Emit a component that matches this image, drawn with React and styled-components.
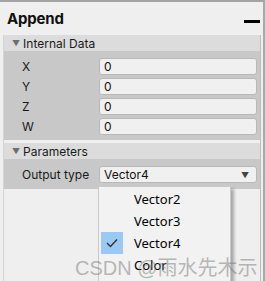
import React from 'react';
import styled, { createGlobalStyle } from 'styled-components';

const GlobalStyle = createGlobalStyle`
  html, body {
    margin: 0;
    padding: 0;
    background: #efefef;
  }
`;

const Node = styled.div`
  position: relative;
  box-sizing: border-box;
  width: 265px;
  height: 281px;
  overflow: hidden;
  background: #efefef;
  border-top: 2px solid #a4a4a4;
  border-right: 2px solid #a8a8a8;
  font-family: Inter, "Noto Sans", sans-serif;
  color: #111;
`;

const Header = styled.div`
  height: 33px;
  display: flex;
  align-items: center;
  justify-content: space-between;
  padding: 0 3px 0 7px;
`;

const Title = styled.div`
  font-size: 15px;
  font-weight: 700;
  letter-spacing: -0.2px;
  color: #111;
`;

const Minus = styled.div`
  width: 16px;
  height: 3px;
  margin-top: 5px;
  background: #000;
`;

const Content = styled.div`
  margin: 0 2px 0 3px;
  border-right: 1px solid #bcbcbc;
  border-left: 1px solid #d4d4d4;
  min-height: 260px;
`;

const SectionHeader = styled.div`
  height: 16px;
  display: flex;
  align-items: center;
  gap: 3px;
  padding-left: 8px;
  background: #dcdcdc;
  font-size: 12px;
  color: #1a1a1a;
  margin-top: ${(p) => (p.$gap ? '3px' : '0')};
`;

const Arrow = styled.span`
  font-size: 8px;
  color: #6e6e6e;
`;

const Body = styled.div`
  background: #c8c8c8;
  padding: 7px 0 6px;
  display: flex;
  flex-direction: column;
  gap: 4px;
`;

const Row = styled.div`
  display: grid;
  grid-template-columns: 95px 1fr;
  align-items: center;
  height: ${(p) => p.$h || 16}px;
  font-size: 12px;
`;

const Label = styled.span`
  padding-left: 18px;
  color: #1a1a1a;
`;

const Field = styled.div`
  box-sizing: border-box;
  height: 100%;
  margin-right: 3px;
  padding-left: 4px;
  display: flex;
  align-items: center;
  justify-content: space-between;
  background: #f0f0f0;
  border: 1px solid #b9b9b9;
  border-radius: 3px;
  color: #111;
`;

const Caret = styled.span`
  font-size: 8px;
  color: #444;
  margin-right: 7px;
`;

const Menu = styled.div`
  position: absolute;
  left: 98px;
  top: 184px;
  width: 133px;
  height: 110px;
  box-sizing: border-box;
  padding-top: 1px;
  background: #f2f2f2;
  border: 1px solid #c9c9c9;
  box-shadow: 3px 3px 3px rgba(0, 0, 0, 0.3);
  font-family: "Noto Sans", "Open Sans", sans-serif;
`;

const Item = styled.div`
  height: 22px;
  display: flex;
  align-items: center;
  font-size: 13px;
  color: #000;
`;

const Check = styled.div`
  width: 22px;
  height: 22px;
  margin-left: 2px;
  margin-right: 11px;
  display: flex;
  align-items: center;
  justify-content: center;
  background: ${(p) => (p.$on ? '#99c9f4' : 'transparent')};
`;

const Watermark = styled.div`
  position: absolute;
  left: 75px;
  top: 250px;
  font-family: "Liberation Sans", "Noto Sans CJK SC", sans-serif;
  font-size: 20px;
  color: rgba(120, 120, 120, 0.5);
  white-space: nowrap;
  pointer-events: none;
`;

const fields = ['X', 'Y', 'Z', 'W'];
const options = ['Vector2', 'Vector3', 'Vector4', 'Color'];

const App = () => {
  return (
    <>
      <GlobalStyle />
      <Node>
        <Header>
          <Title>Append</Title>
          <Minus />
        </Header>
        <Content>
          <SectionHeader>
            <Arrow>▼</Arrow>Internal Data
          </SectionHeader>
          <Body>
            {fields.map((f) => (
              <Row key={f}>
                <Label>{f}</Label>
                <Field>0</Field>
              </Row>
            ))}
          </Body>
          <SectionHeader $gap>
            <Arrow>▼</Arrow>Parameters
          </SectionHeader>
          <Body>
            <Row $h={17}>
              <Label>Output type</Label>
              <Field>
                Vector4
                <Caret>▼</Caret>
              </Field>
            </Row>
          </Body>
        </Content>
        <Menu>
          {options.map((o) => (
            <Item key={o}>
              <Check $on={o === 'Vector4'}>
                {o === 'Vector4' && (
                  <svg width="12" height="10" viewBox="0 0 12 10">
                    <polyline points="1,5 4.5,8.5 11,1.5" fill="none" stroke="#333" strokeWidth="1.4" />
                  </svg>
                )}
              </Check>
              {o}
            </Item>
          ))}
        </Menu>
        <Watermark>CSDN @雨水先木示</Watermark>
      </Node>
    </>
  );
};

export default App;
